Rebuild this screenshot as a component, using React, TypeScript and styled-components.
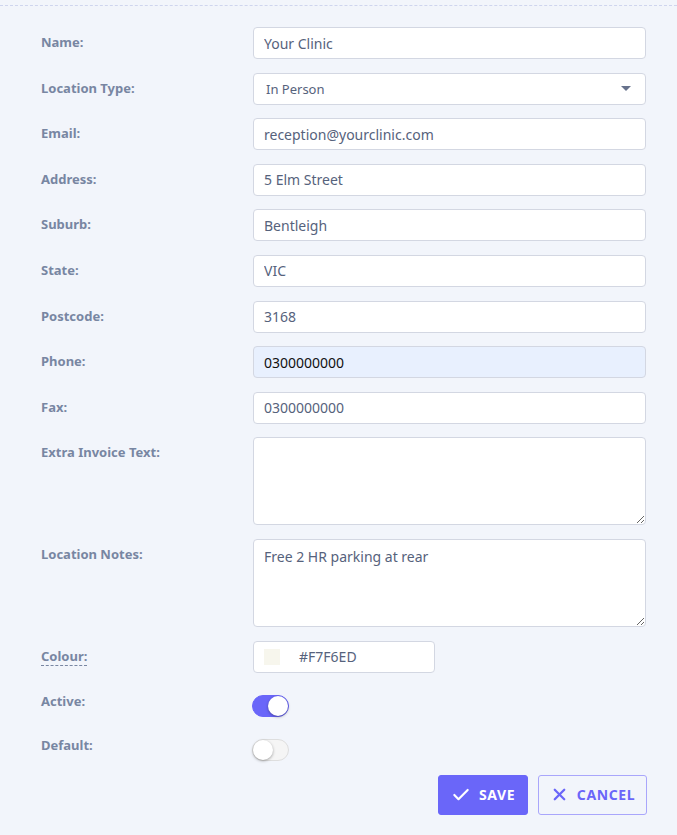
import React from 'react';
import styled, { createGlobalStyle } from 'styled-components';
import { Check, X } from 'lucide-react';

const GlobalStyle = createGlobalStyle`
  body {
    margin: 0;
    background: #f2f5fb;
    font-family: 'Noto Sans', 'Open Sans', sans-serif;
  }
`;

const fields: { label: string; value: string; autofill?: boolean }[] = [
  { label: 'Email:', value: 'reception@yourclinic.com' },
  { label: 'Address:', value: '5 Elm Street' },
  { label: 'Suburb:', value: 'Bentleigh' },
  { label: 'State:', value: 'VIC' },
  { label: 'Postcode:', value: '3168' },
  { label: 'Phone:', value: '0300000000', autofill: true },
  { label: 'Fax:', value: '0300000000' },
];

const App: React.FC = () => {
  return (
    <>
      <GlobalStyle />
      <Page>
        <Form>
          <Label>Name:</Label>
          <Input defaultValue="Your Clinic" />

          <Label>Location Type:</Label>
          <SelectBox>
            <span>In Person</span>
            <Caret />
          </SelectBox>

          {fields.map((f) => (
            <React.Fragment key={f.label}>
              <Label>{f.label}</Label>
              <Input defaultValue={f.value} $autofill={f.autofill} />
            </React.Fragment>
          ))}

          <Label>Extra Invoice Text:</Label>
          <TextArea defaultValue="" />

          <Label>Location Notes:</Label>
          <TextArea defaultValue="Free 2 HR parking at rear" />

          <Label>
            <Abbr>Colour:</Abbr>
          </Label>
          <ColourBox>
            <Swatch $color="#F7F6ED" />
            <span>#F7F6ED</span>
          </ColourBox>

          <Label>Active:</Label>
          <ToggleCell>
            <Toggle $on />
          </ToggleCell>

          <Label>Default:</Label>
          <ToggleCell>
            <Toggle />
          </ToggleCell>
        </Form>
        <Actions>
          <SaveButton>
            <Check size={20} strokeWidth={2.6} />
            Save
          </SaveButton>
          <CancelButton>
            <X size={19} strokeWidth={2.8} />
            Cancel
          </CancelButton>
        </Actions>
      </Page>
    </>
  );
};

const Page = styled.div`
  margin-top: 5px;
  border-top: 1px dashed #cfd5ee;
  padding: 21px 30px 20px 41px;
`;

const Form = styled.div`
  display: grid;
  grid-template-columns: 212px 393px;
  row-gap: 13.6px;
`;

const Label = styled.div`
  padding-top: 6px;
  font-size: 13px;
  font-weight: 700;
  color: #7886a2;
  line-height: 18px;
`;

const Abbr = styled.span`
  border-bottom: 1px dashed #7886a2;
`;

const fieldBase = `
  box-sizing: border-box;
  width: 100%;
  border: 1px solid #d3d7e2;
  border-radius: 4px;
  background: #fff;
  font-family: 'Noto Sans', 'Open Sans', sans-serif;
  font-size: 14px;
  color: #56627c;
  outline: none;
`;

const Input = styled.input<{ $autofill?: boolean }>`
  ${fieldBase}
  height: 32px;
  padding: 0 10px;
  background: ${(p) => (p.$autofill ? '#e8f0fe' : '#fff')};
  color: ${(p) => (p.$autofill ? '#111' : '#56627c')};
`;

const SelectBox = styled.div`
  ${fieldBase}
  height: 32px;
  padding: 0 14px 0 12px;
  display: flex;
  align-items: center;
  justify-content: space-between;
  font-size: 13px;
`;

const Caret = styled.span`
  width: 0;
  height: 0;
  border-left: 5px solid transparent;
  border-right: 5px solid transparent;
  border-top: 5px solid #67728c;
`;

const TextArea = styled.textarea`
  ${fieldBase}
  display: block;
  height: 88px;
  padding: 7px 10px;
  line-height: 20px;
  resize: vertical;
`;

const ColourBox = styled.div`
  ${fieldBase}
  width: 182px;
  height: 32px;
  padding: 0 10px;
  display: flex;
  align-items: center;
  gap: 19px;
`;

const Swatch = styled.span<{ $color: string }>`
  width: 16px;
  height: 16px;
  background: ${(p) => p.$color};
`;

const ToggleCell = styled.div`
  box-sizing: border-box;
  height: 30.4px;
  padding-top: 8.4px;
  display: flex;
  align-items: flex-start;
`;

const Toggle = styled.span<{ $on?: boolean }>`
  position: relative;
  box-sizing: border-box;
  width: 37px;
  height: 22px;
  border-radius: 11px;
  margin-left: -1px;
  background: ${(p) => (p.$on ? '#6a66f9' : '#f5f5f5')};
  border: 1px solid ${(p) => (p.$on ? '#6a66f9' : '#dedede')};
  &::after {
    content: '';
    position: absolute;
    top: 0;
    left: ${(p) => (p.$on ? '15px' : '0')};
    width: 20px;
    height: 20px;
    border-radius: 50%;
    background: #fff;
    box-shadow: 0 1px 3px rgba(0, 0, 0, 0.35);
  }
`;

const Actions = styled.div`
  display: flex;
  justify-content: flex-end;
  gap: 10px;
  margin-top: 14px;
  width: 606px;
`;

const buttonBase = `
  box-sizing: border-box;
  height: 40px;
  display: flex;
  align-items: center;
  justify-content: center;
  gap: 8px;
  border-radius: 3px;
  font-family: 'Noto Sans', 'Open Sans', sans-serif;
  font-size: 14px;
  font-weight: 700;
  text-transform: uppercase;
  letter-spacing: 0.6px;
  cursor: pointer;
`;

const SaveButton = styled.button`
  ${buttonBase}
  width: 90px;
  border: 1px solid #6a66f9;
  background: #6a66f9;
  color: #fff;
`;

const CancelButton = styled.button`
  ${buttonBase}
  width: 109px;
  border: 1px solid #a9a6fb;
  background: transparent;
  color: #6a66f9;
`;

export default App;
